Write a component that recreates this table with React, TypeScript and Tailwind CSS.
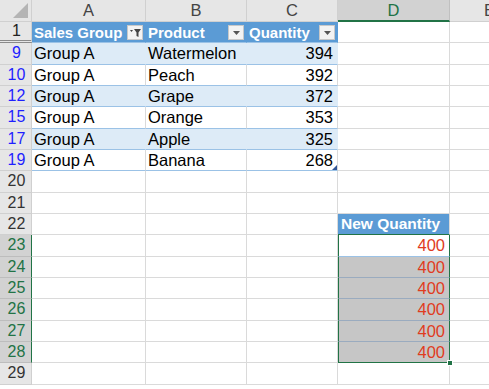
import React from "react";

type Kind = "plain" | "head" | "band" | "white";

const cols = ["A", "B", "C", "D", "E"];
const widths = ["w-[114px]", "w-[101px]", "w-[91px]", "w-[112px]", "flex-1"];

function FilterButton({ funnel }: { funnel?: boolean }) {
  return (
    <span className="absolute right-[2px] top-[3px] w-[16px] h-[15px] bg-[#f3f3f3] border border-[#c8c8c8] flex items-center justify-center">
      {funnel ? (
        <svg width="11" height="8" viewBox="0 0 11 8">
          <path d="M0 1h3L1.5 3z" fill="#444" />
          <path d="M4 0h7L8.5 3.5V8L6.5 7V3.5z" fill="#444" />
        </svg>
      ) : (
        <svg width="7" height="4" viewBox="0 0 7 4">
          <path d="M0 0h7L3.5 4z" fill="#555" />
        </svg>
      )}
    </span>
  );
}

function cellBase(kind: Kind) {
  if (kind === "head") return "bg-[#5b9bd5] border-r border-b border-r-[#5b9bd5] border-b-[#9bc2e6] text-white font-bold text-[15px]";
  if (kind === "band") return "bg-[#ddebf7] border-r border-b border-r-[#ddebf7] border-b-[#9bc2e6]";
  if (kind === "white") return "bg-white border-r border-b border-r-[#dadada] border-b-[#9bc2e6]";
  return "bg-white border-r border-b border-[#dadada]";
}

type RowDef = {
  n: number;
  kind?: Kind;
  a?: string;
  b?: string;
  c?: string;
  d?: string;
  dMode?: "head" | "active" | "sel" | "selLast";
};

const rows: RowDef[] = [
  { n: 1, kind: "head", a: "Sales Group", b: "Product", c: "Quantity" },
  { n: 9, kind: "band", a: "Group A", b: "Watermelon", c: "394" },
  { n: 10, kind: "white", a: "Group A", b: "Peach", c: "392" },
  { n: 12, kind: "band", a: "Group A", b: "Grape", c: "372" },
  { n: 15, kind: "white", a: "Group A", b: "Orange", c: "353" },
  { n: 17, kind: "band", a: "Group A", b: "Apple", c: "325" },
  { n: 19, kind: "white", a: "Group A", b: "Banana", c: "268" },
  { n: 20 },
  { n: 21 },
  { n: 22, d: "New Quantity", dMode: "head" },
  { n: 23, d: "400", dMode: "active" },
  { n: 24, d: "400", dMode: "sel" },
  { n: 25, d: "400", dMode: "sel" },
  { n: 26, d: "400", dMode: "sel" },
  { n: 27, d: "400", dMode: "sel" },
  { n: 28, d: "400", dMode: "selLast" },
  { n: 29 },
];

function RowHeader({ r }: { r: RowDef }) {
  const selected = r.n >= 23 && r.n <= 28;
  const filtered = r.kind && r.kind !== "head";
  let cls = "bg-[#e6e6e6] text-[#333] border-r border-b border-[#d0d0d0]";
  if (selected) cls = "bg-[#d2d2d2] text-[#217346] border-r border-r-[#217346] border-b border-b-[#bdbdbd]";
  else if (filtered) cls = "bg-[#e6e6e6] text-[#1f1fff] border-r border-b border-[#d0d0d0]";
  if (r.n === 1) cls = "bg-[#e6e6e6] text-[#222] border-r border-r-[#d0d0d0] border-b-[3px] border-double border-b-[#8a8a8a]";
  return (
    <div className={`w-[32px] shrink-0 h-full flex items-center justify-center pl-[2px] text-[16px] ${cls}`}>
      {r.n}
    </div>
  );
}

function DCell({ r }: { r: RowDef }) {
  if (r.dMode === "head")
    return (
      <div className="w-[112px] shrink-0 h-full flex items-center pl-[3px] bg-[#5b9bd5] text-white font-bold text-[15.5px] border-r border-r-[#dadada] border-b border-b-[#217346]">
        {r.d}
      </div>
    );
  if (r.dMode === "active")
    return (
      <div className="w-[112px] shrink-0 h-full flex items-center justify-end pr-[4px] bg-white text-[#e03c1e] border-x border-[#217346] border-b border-b-[#9bc2e6]">
        {r.d}
      </div>
    );
  if (r.dMode === "sel")
    return (
      <div className="w-[112px] shrink-0 h-full flex items-center justify-end pr-[4px] bg-[#c6c6c6] text-[#e03c1e] border-x border-[#217346] border-b border-b-[#9aabbf]">
        {r.d}
      </div>
    );
  if (r.dMode === "selLast")
    return (
      <div className="relative w-[112px] shrink-0 h-full flex items-center justify-end pr-[4px] bg-[#c6c6c6] text-[#e03c1e] border-x border-b border-[#217346]">
        {r.d}
        <span className="absolute right-[-4px] bottom-[-4px] w-[6px] h-[6px] bg-[#217346] border border-white z-10" />
      </div>
    );
  return <div className="w-[112px] shrink-0 h-full border-r border-b border-[#dadada] bg-white" />;
}

function DataRow({ r }: { r: RowDef }) {
  const kind = r.kind ?? "plain";
  const head = kind === "head";
  return (
    <div className="flex h-[21.33px] text-[16.5px] leading-none">
      <RowHeader r={r} />
      <div className={`relative w-[114px] shrink-0 h-full flex items-center pl-[2px] ${cellBase(kind)}`}>
        {r.a}
        {head && <FilterButton funnel />}
      </div>
      <div className={`relative w-[101px] shrink-0 h-full flex items-center pl-[2px] ${cellBase(kind)}`}>
        {r.b}
        {head && <FilterButton />}
      </div>
      <div className={`relative w-[91px] shrink-0 h-full flex items-center ${head ? "justify-start pl-[2px]" : "justify-end pr-[4px]"} ${cellBase(kind)}`}>
        {r.c}
        {head && <FilterButton />}
        {r.n === 19 && (
          <svg className="absolute right-0 bottom-0" width="5" height="5" viewBox="0 0 5 5">
            <path d="M5 0v5H0z" fill="#2f5597" />
          </svg>
        )}
      </div>
      <DCell r={r} />
      <div className="flex-1 h-full border-b border-[#dadada] bg-white" />
    </div>
  );
}

export default function App() {
  return (
    <div className="w-[489px] h-[389px] overflow-hidden bg-white text-black font-['Liberation_Sans',Arial,sans-serif]">
      <div className="flex h-[22px] text-[16.5px] text-[#444]">
        <div className="w-[32px] shrink-0 h-full bg-[#e6e6e6] border-r border-b border-[#d0d0d0] flex items-end justify-end p-[3px]">
          <svg width="15" height="15" viewBox="0 0 15 15">
            <path d="M15 0v15H0z" fill="#b4b4b4" />
          </svg>
        </div>
        {cols.map((c, i) => (
          <div
            key={c}
            className={`${widths[i]} ${i < 4 ? "shrink-0" : ""} h-full flex items-center ${i === 4 ? "justify-start" : "justify-center"} ${
              c === "D"
                ? "bg-[#d2d2d2] text-[#217346] border-r border-r-[#c0c0c0] border-b-2 border-b-[#217346]"
                : "bg-[#e6e6e6] border-r border-b border-[#d0d0d0]"
            }`}
          >
            {c === "E" ? <span className="ml-[34px]">E</span> : c}
          </div>
        ))}
      </div>
      {rows.map((r) => (
        <DataRow key={r.n} r={r} />
      ))}
    </div>
  );
}
